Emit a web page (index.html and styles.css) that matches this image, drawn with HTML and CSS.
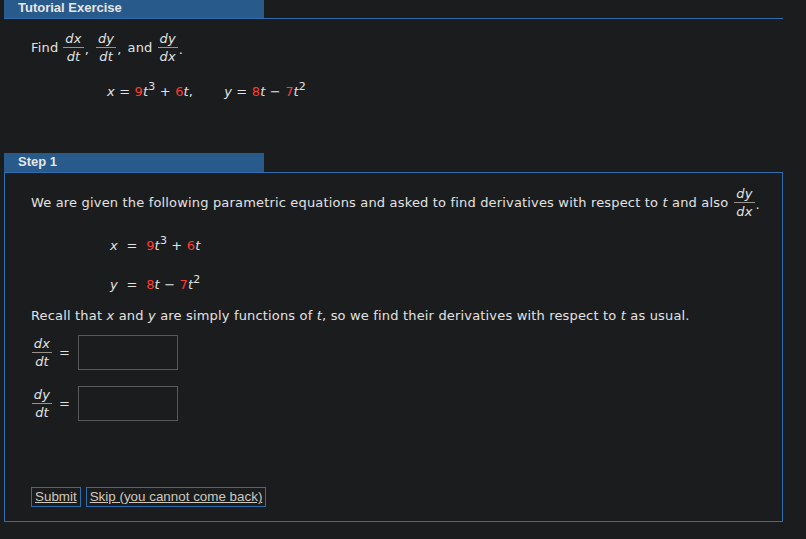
FILE: index.html
```html
<!DOCTYPE html>
<html>
<head>
<meta charset="utf-8">
<link rel="stylesheet" href="styles.css">
</head>
<body>
<div class="head">
  <div class="tab tab-title">Tutorial Exercise</div>
</div>
<div class="intro">
  <div class="find"><span class="word">Find</span><span class="frac"><span class="num"><i>dx</i></span><span class="den"><i>dt</i></span></span><span class="punct">,</span><span class="frac"><span class="num"><i>dy</i></span><span class="den"><i>dt</i></span></span><span class="punct">,</span><span class="word">and</span><span class="frac"><span class="num"><i>dy</i></span><span class="den"><i>dx</i></span></span><span class="punct">.</span></div>
  <div class="eqline">
    <span><i>x</i> = <span class="r">9</span><i>t</i><sup>3</sup> + <span class="r">6</span><i>t</i>,</span>
    <span class="eq2"><i>y</i> = <span class="r">8</span><i>t</i> &minus; <span class="r">7</span><i>t</i><sup>2</sup></span>
  </div>
</div>
<div class="step">
  <div class="head step-head">
    <div class="tab">Step 1</div>
  </div>
  <div class="box">
    <p class="given"><span>We are given the following parametric equations and asked to find derivatives with respect to <i>t</i> and also</span><span class="frac"><span class="num"><i>dy</i></span><span class="den"><i>dx</i></span></span><span class="punct">.</span></p>
    <div class="eq"><i>x</i> &nbsp;= &nbsp;<span class="r">9</span><i>t</i><sup>3</sup> + <span class="r">6</span><i>t</i></div>
    <div class="eq"><i>y</i> &nbsp;= &nbsp;<span class="r">8</span><i>t</i> &minus; <span class="r">7</span><i>t</i><sup>2</sup></div>
    <p class="recall">Recall that <i>x</i> and <i>y</i> are simply functions of <i>t</i>, so we find their derivatives with respect to <i>t</i> as usual.</p>
    <div class="ans">
      <span class="frac"><span class="num"><i>dx</i></span><span class="den"><i>dt</i></span></span>
      <span class="equals">=</span>
      <span class="input"></span>
    </div>
    <div class="ans">
      <span class="frac"><span class="num"><i>dy</i></span><span class="den"><i>dt</i></span></span>
      <span class="equals">=</span>
      <span class="input"></span>
    </div>
    <div class="buttons">
      <span class="btn">Submit</span>
      <span class="btn">Skip (you cannot come back)</span>
    </div>
  </div>
</div>
</body>
</html>
```
FILE: styles.css
```css
body {
  margin: 0;
  background: #1b1c1e;
  color: #e2e2e2;
  font-family: "DejaVu Sans", Verdana, sans-serif;
  font-size: 13px;
  letter-spacing: 0.17px;
}
i { font-style: italic; }
.r { color: #ff3b30; }
sup { font-size: 11px; vertical-align: 0; position: relative; top: -6px; }

.head {
  margin-left: 4px;
  width: 779px;
  border-bottom: 1px solid #2f6db0;
  height: 18px;
}
.tab {
  width: 260px;
  height: 18px;
  background: #285a8b;
  color: #e6e6e6;
  font-family: "Liberation Sans", Arial, sans-serif;
  font-weight: bold;
  font-size: 13px;
  letter-spacing: 0;
  line-height: 16px;
  padding-left: 14px;
  box-sizing: border-box;
}
.intro {
  padding-left: 31px;
  height: 122px;
}
.find {
  margin-top: 12px;
  display: flex;
  align-items: center;
}
.find .word { margin-right: 4px; }
.find .punct { align-self: center; margin-top: 3px; margin-right: 6px; }
.frac {
  display: inline-flex;
  flex-direction: column;
  align-items: center;
  vertical-align: middle;
  line-height: 15px;
  padding: 0 1px;
}
.frac .num { border-bottom: 1px solid #9a9288; padding: 0 2px 1px; }
.frac .den { padding-top: 1px; }
.eqline {
  margin-top: 20px;
  padding-left: 76px;
  display: flex;
  gap: 31px;
}

.step-head { height: 19px; }
.step-head .tab { height: 19px; line-height: 18px; }
.box {
  margin-left: 4px;
  width: 779px;
  height: 349px;
  box-sizing: border-box;
  border: 1px solid #2f6db0;
  border-top: none;
  padding: 13px 26px 0;
}
.given { margin: 0; display: flex; align-items: center; white-space: nowrap; }
.given > span:first-child { margin-right: 5px; }
.given .punct { margin-top: 3px; }
.eq { padding-left: 79px; margin-top: 19px; height: 23px; }
.eq + .eq { margin-top: 16px; }
.recall { margin: 8px 0 0; }
.ans {
  display: flex;
  align-items: center;
  margin-top: 12px;
  height: 35px;
}
.ans + .ans { margin-top: 16px; }
.ans .frac { padding: 0; width: 22px; }
.equals { margin: 0 8px 0 6px; }
.input {
  width: 100px;
  height: 35px;
  box-sizing: border-box;
  border: 1px solid #5a5a5a;
  background: #1b1c1e;
}
.buttons { margin-top: 66px; display: flex; gap: 5px; }
.btn {
  border: 1px solid #2f6db0;
  color: #cfc8bd;
  text-decoration: underline;
  font-family: "Liberation Sans", Arial, sans-serif;
  font-size: 13.4px;
  letter-spacing: 0;
  padding: 1px 3px;
  line-height: 16px;
}
```
